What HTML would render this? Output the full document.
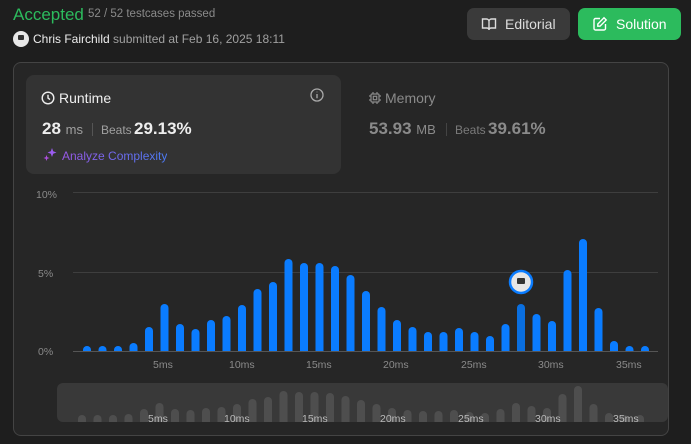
<!DOCTYPE html>
<html><head><meta charset="utf-8"><style>
*{margin:0;padding:0;box-sizing:border-box}
body{width:691px;height:444px;background:#1e1e1e;font-family:"Liberation Sans",sans-serif;position:relative;overflow:hidden;color:#eee}
.a{position:absolute;white-space:nowrap}
</style></head><body>
<div class="a" style="left:13px;top:5px;font-size:17px;color:#2cbb5d">Accepted</div>
<div class="a" style="left:88px;top:8px;font-size:11.5px;color:#8a8a8a">52 / 52 testcases passed</div>
<div class="a" style="left:13px;top:31px;width:16px;height:16px;border-radius:50%;background:#e8e8e8"><div style="position:absolute;left:5px;top:4px;width:6px;height:5px;background:#333;border-radius:1px"></div></div>
<div class="a" style="left:33px;top:32px;font-size:12px;color:#eee">Chris Fairchild <span style="color:#a0a0a0">submitted at Feb 16, 2025 18:11</span></div>

<div class="a" style="left:467px;top:8px;width:103px;height:32px;border-radius:7px;background:#3a3a3a;color:#ddd;font-size:14px;line-height:32px;padding-left:38px">Editorial
<svg style="position:absolute;left:14px;top:8px" width="16" height="16" viewBox="0 0 16 16" fill="none" stroke="#ddd" stroke-width="1.4"><path d="M1.5 3h4a2.5 2.5 0 0 1 2.5 2.5V14a2 2 0 0 0-2-2H1.5zM14.5 3h-4A2.5 2.5 0 0 0 8 5.5V14a2 2 0 0 1 2-2h4.5z"/></svg></div>
<div class="a" style="left:578px;top:8px;width:103px;height:32px;border-radius:7px;background:#2cbb5d;color:#fff;font-size:14px;line-height:32px;padding-left:38px">Solution
<svg style="position:absolute;left:14px;top:8px" width="16" height="16" viewBox="0 0 16 16" fill="none" stroke="#fff" stroke-width="1.4"><path d="M8 2.5H3.5a1.5 1.5 0 0 0-1.5 1.5v8.5a1.5 1.5 0 0 0 1.5 1.5H12a1.5 1.5 0 0 0 1.5-1.5V8"/><path d="M12 1.8l2.2 2.2L8 10.2H5.8V8z"/></svg></div>

<div class="a" style="left:13px;top:62px;width:656px;height:374px;border:1px solid #444;border-radius:8px;background:#262626"></div>
<div class="a" style="left:26px;top:75px;width:315px;height:99px;border-radius:8px;background:#333"></div>
<svg class="a" style="left:41px;top:91px" width="14" height="14" viewBox="0 0 14 14" fill="none" stroke="#eee" stroke-width="1.4"><circle cx="7" cy="7" r="5.8"/><path d="M7 3.8V7l2 1.6"/></svg>
<div class="a" style="left:59px;top:90px;font-size:14px;color:#eee">Runtime</div>
<svg class="a" style="left:310px;top:88px" width="14" height="14" viewBox="0 0 14 14" fill="none" stroke="#aaa" stroke-width="1.3"><circle cx="7" cy="7" r="6"/><path d="M7 6v4.2M7 3.8v.4"/></svg>
<div class="a" style="left:42px;top:119px;font-size:17px;font-weight:bold;color:#eee">28 <span style="font-size:13px;font-weight:normal;color:#a0a0a0">ms</span></div>
<div class="a" style="left:92px;top:123px;width:1px;height:13px;background:#555"></div>
<div class="a" style="left:101px;top:123px;font-size:12px;color:#a0a0a0">Beats</div>
<div class="a" style="left:134px;top:119px;font-size:17px;font-weight:bold;color:#eee">29.13%</div>
<svg class="a" style="left:42px;top:147px" width="16" height="15" viewBox="0 0 16 15"><path d="M10 1l1.2 3.3L14.5 5.5 11.2 6.7 10 10 8.8 6.7 5.5 5.5 8.8 4.3z" fill="#9b5cf0"/><path d="M4.5 8l.8 2.2 2.2.8-2.2.8-.8 2.2-.8-2.2-2.2-.8 2.2-.8z" fill="#b04fe0"/></svg>
<div class="a" style="left:62px;top:149px;font-size:12px;background:linear-gradient(90deg,#9a58e8,#4b7bf5);-webkit-background-clip:text;color:transparent">Analyze Complexity</div>

<svg class="a" style="left:369px;top:92px" width="12" height="12" viewBox="0 0 12 12" fill="none" stroke="#8a8a8a" stroke-width="1.2"><rect x="2" y="2" width="8" height="8" rx="1"/><rect x="4.3" y="4.3" width="3.4" height="3.4"/><path d="M4 0v2M8 0v2M4 10v2M8 10v2M0 4h2M0 8h2M10 4h2M10 8h2"/></svg>
<div class="a" style="left:385px;top:90px;font-size:14px;color:#8a8a8a">Memory</div>
<div class="a" style="left:369px;top:119px;font-size:17px;font-weight:bold;color:#8a8a8a">53.93 <span style="font-size:13px;font-weight:normal">MB</span></div>
<div class="a" style="left:446px;top:123px;width:1px;height:13px;background:#444"></div>
<div class="a" style="left:455px;top:123px;font-size:12px;color:#7a7a7a">Beats</div>
<div class="a" style="left:488px;top:119px;font-size:17px;font-weight:bold;color:#8a8a8a">39.61%</div>

<svg class="a" style="left:0;top:0" width="691" height="444">
<defs><clipPath id="c1"><rect x="0" y="0" width="691" height="351"/></clipPath><clipPath id="c2"><rect x="57" y="383" width="611" height="39"/></clipPath></defs>
<g font-family="Liberation Sans,sans-serif" font-size="10.5" fill="#8a8a8a">
<text x="36" y="198">10%</text><text x="38" y="277">5%</text><text x="38" y="355">0%</text>
<text x="153" y="368">5ms</text><text x="229" y="368">10ms</text><text x="306" y="368">15ms</text><text x="383" y="368">20ms</text><text x="461" y="368">25ms</text><text x="538" y="368">30ms</text><text x="616" y="368">35ms</text>
</g>
<g stroke="#3e3e3e" stroke-width="1"><line x1="73" y1="192.5" x2="658" y2="192.5"/><line x1="73" y1="272.5" x2="658" y2="272.5"/></g>
<line x1="73" y1="351.5" x2="658" y2="351.5" stroke="#555"/>
<g clip-path="url(#c1)" stroke="#0a7cff" stroke-width="8" stroke-linecap="round">
<line x1="87" y1="356" x2="87" y2="350"/><line x1="102.5" y1="356" x2="102.5" y2="350"/><line x1="118" y1="356" x2="118" y2="350"/><line x1="133.5" y1="356" x2="133.5" y2="347"/><line x1="149" y1="356" x2="149" y2="331"/><line x1="164.5" y1="356" x2="164.5" y2="308"/><line x1="180" y1="356" x2="180" y2="328"/><line x1="195.5" y1="356" x2="195.5" y2="333"/><line x1="211" y1="356" x2="211" y2="324"/><line x1="226.5" y1="356" x2="226.5" y2="320"/><line x1="242" y1="356" x2="242" y2="309"/><line x1="257.5" y1="356" x2="257.5" y2="293"/><line x1="273" y1="356" x2="273" y2="286"/><line x1="288.5" y1="356" x2="288.5" y2="263"/><line x1="304" y1="356" x2="304" y2="267"/><line x1="319.5" y1="356" x2="319.5" y2="267"/><line x1="335" y1="356" x2="335" y2="270"/><line x1="350.5" y1="356" x2="350.5" y2="279"/><line x1="366" y1="356" x2="366" y2="295"/><line x1="381.5" y1="356" x2="381.5" y2="311"/><line x1="397" y1="356" x2="397" y2="324"/><line x1="412.5" y1="356" x2="412.5" y2="331"/><line x1="428" y1="356" x2="428" y2="336"/><line x1="443.5" y1="356" x2="443.5" y2="336"/><line x1="459" y1="356" x2="459" y2="332"/><line x1="474.5" y1="356" x2="474.5" y2="336"/><line x1="490" y1="356" x2="490" y2="340"/><line x1="505.5" y1="356" x2="505.5" y2="328"/><line x1="521" y1="356" x2="521" y2="308" stroke="#0a6fe0"/><line x1="536.5" y1="356" x2="536.5" y2="318"/><line x1="552" y1="356" x2="552" y2="325"/><line x1="567.5" y1="356" x2="567.5" y2="274"/><line x1="583" y1="356" x2="583" y2="243"/><line x1="598.5" y1="356" x2="598.5" y2="312"/><line x1="614" y1="356" x2="614" y2="345"/><line x1="629.5" y1="356" x2="629.5" y2="350"/><line x1="645" y1="356" x2="645" y2="350"/>
</g>
<circle cx="521" cy="282" r="11" fill="#e6e6e6" stroke="#0a7cff" stroke-width="2.5"/>
<rect x="517" y="278" width="8" height="6" rx="1" fill="#333"/>
<rect x="57" y="383" width="611" height="39" rx="6" fill="#393939"/>
<g clip-path="url(#c2)" stroke="#4e4e4e" stroke-width="8" stroke-linecap="round">
<line x1="82" y1="426" x2="82" y2="419"/><line x1="97.5" y1="426" x2="97.5" y2="419"/><line x1="113" y1="426" x2="113" y2="419"/><line x1="128.5" y1="426" x2="128.5" y2="418"/><line x1="144" y1="426" x2="144" y2="413"/><line x1="159.5" y1="426" x2="159.5" y2="407"/><line x1="175" y1="426" x2="175" y2="413"/><line x1="190.5" y1="426" x2="190.5" y2="414"/><line x1="206" y1="426" x2="206" y2="412"/><line x1="221.5" y1="426" x2="221.5" y2="411"/><line x1="237" y1="426" x2="237" y2="408"/><line x1="252.5" y1="426" x2="252.5" y2="403"/><line x1="268" y1="426" x2="268" y2="401"/><line x1="283.5" y1="426" x2="283.5" y2="395"/><line x1="299" y1="426" x2="299" y2="396"/><line x1="314.5" y1="426" x2="314.5" y2="396"/><line x1="330" y1="426" x2="330" y2="397"/><line x1="345.5" y1="426" x2="345.5" y2="400"/><line x1="361" y1="426" x2="361" y2="404"/><line x1="376.5" y1="426" x2="376.5" y2="408"/><line x1="392" y1="426" x2="392" y2="412"/><line x1="407.5" y1="426" x2="407.5" y2="414"/><line x1="423" y1="426" x2="423" y2="415"/><line x1="438.5" y1="426" x2="438.5" y2="415"/><line x1="454" y1="426" x2="454" y2="414"/><line x1="469.5" y1="426" x2="469.5" y2="416"/><line x1="485" y1="426" x2="485" y2="417"/><line x1="500.5" y1="426" x2="500.5" y2="413"/><line x1="516" y1="426" x2="516" y2="407"/><line x1="531.5" y1="426" x2="531.5" y2="410"/><line x1="547" y1="426" x2="547" y2="412"/><line x1="562.5" y1="426" x2="562.5" y2="398"/><line x1="578" y1="426" x2="578" y2="390"/><line x1="593.5" y1="426" x2="593.5" y2="408"/><line x1="609" y1="426" x2="609" y2="417"/><line x1="624.5" y1="426" x2="624.5" y2="419"/><line x1="640" y1="426" x2="640" y2="419"/>
</g>
<g font-family="Liberation Sans,sans-serif" font-size="10.5" fill="#bbb">
<text x="148" y="422">5ms</text><text x="224" y="422">10ms</text><text x="302" y="422">15ms</text><text x="380" y="422">20ms</text><text x="458" y="422">25ms</text><text x="535" y="422">30ms</text><text x="613" y="422">35ms</text>
</g>
</svg>
</body></html>
